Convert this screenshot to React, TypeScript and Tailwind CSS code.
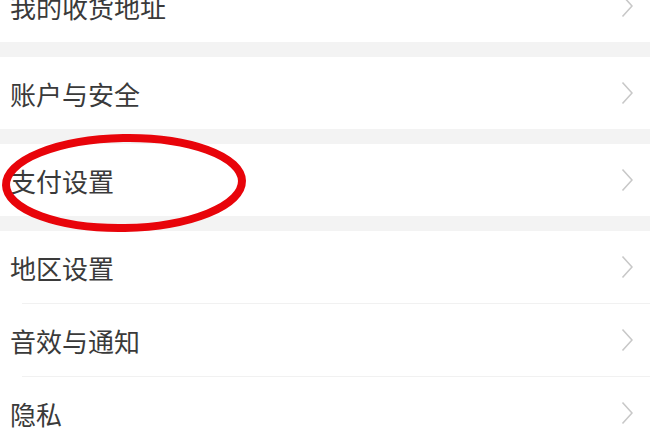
const groups: string[][] = [
  ["我的收货地址"],
  ["账户与安全"],
  ["支付设置"],
  ["地区设置", "音效与通知", "隐私"],
];

function Chevron() {
  return (
    <svg width="12" height="24" viewBox="0 0 12 24" fill="none" stroke="#c8c8c8" strokeWidth="1.6">
      <path d="M1.5 1.5 11 12 1.5 22.5" />
    </svg>
  );
}

function Row({ label, divider }: { label: string; divider: boolean }) {
  return (
    <div className="flex flex-col">
      {divider && <div className="ml-[22px] h-px bg-[#f1f1f1]" />}
      <div className="flex h-[72px] items-center justify-between bg-white pl-[10px] pr-[17px]">
        <span className="pt-[2px] text-[26px] leading-none text-[#3a3a3a]">{label}</span>
        <Chevron />
      </div>
    </div>
  );
}

export default function App() {
  return (
    <div
      className="relative h-[430px] w-[650px] overflow-hidden bg-[#f3f3f3]"
      style={{ fontFamily: '"Noto Sans CJK SC", "Noto Sans", sans-serif' }}
    >
      <div className="mt-[-30px] flex flex-col gap-[15px]">
        {groups.map((g, gi) => (
          <div key={gi} className="flex flex-col bg-white">
            {g.map((label, i) => (
              <Row key={label} label={label} divider={i > 0} />
            ))}
          </div>
        ))}
      </div>
      <svg
        className="pointer-events-none absolute left-0 top-0"
        width="650"
        height="430"
        viewBox="0 0 650 430"
      >
        <ellipse
          cx="124"
          cy="183"
          rx="118"
          ry="45"
          fill="none"
          stroke="#e8040a"
          strokeWidth="8"
          transform="rotate(-1 124 183)"
        />
      </svg>
    </div>
  );
}
